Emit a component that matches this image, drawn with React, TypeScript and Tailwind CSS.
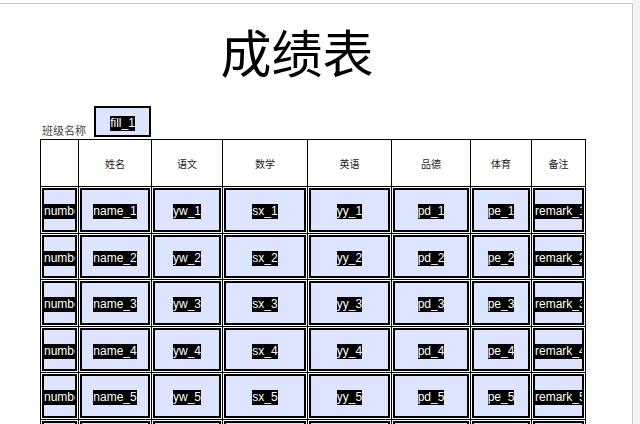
const HEADERS = ["", "姓名", "语文", "数学", "英语", "品德", "体育", "备注"]
const FIELDS = ["number", "name", "yw", "sx", "yy", "pd", "pe", "remark"]
const ROW_HEIGHTS = ["h-[46px]", "h-[45px]", "h-[46px]", "h-[45px]", "h-[46px]", "h-[46px]", "h-[45px]"]

const BOX_CLASS =
  "flex h-full items-center border-2 border-black bg-[#dde4ff] overflow-hidden"

function FieldText({ value }: { value: string }) {
  return (
    <div className="w-full overflow-hidden whitespace-nowrap pt-[3px] text-center leading-[15px]">
      <span className="inline-block h-[15px] bg-black align-top text-[12px] leading-[14px] text-white">
        {value}
      </span>
    </div>
  )
}

export default function App() {
  return (
    <div className="flex h-screen overflow-hidden bg-white font-['Liberation_Sans','Noto_Sans_CJK_SC',sans-serif]">
      <div className="mt-[3px] w-[633px] shrink-0 border-t border-r border-[#c8c8c8]">
        <div className="mt-[22px] w-[594px] text-center font-['Noto_Sans_CJK_SC',sans-serif] text-[51px] leading-[51px] text-black">
          成绩表
        </div>

        <div className="mt-[29px] ml-[42px] flex items-end gap-[8px]">
          <span className="mb-[1px] font-['Noto_Sans_CJK_SC',sans-serif] text-[11px] leading-[12px] text-[#444]">
            班级名称
          </span>
          <div className="flex h-[31px] w-[57px] items-center border-2 border-black bg-[#dde4ff]">
            <FieldText value="fill_1" />
          </div>
        </div>

        <div className="mt-[2px] ml-[40px] grid w-fit grid-cols-[37px_72px_70px_84px_83px_78px_60px_53px] gap-px border border-black bg-black">
          {HEADERS.map((header, index) => (
            <div
              key={index}
              className="flex h-[46px] items-center justify-center bg-white font-['Noto_Sans_CJK_SC',sans-serif] text-[10px] text-[#222]"
            >
              {header}
            </div>
          ))}
          {ROW_HEIGHTS.map((rowHeight, rowIndex) =>
            FIELDS.map((field) => (
              <div key={`${field}-${rowIndex}`} className={`${rowHeight} bg-white p-px`}>
                <div className={BOX_CLASS}>
                  <FieldText value={`${field}_${rowIndex + 1}`} />
                </div>
              </div>
            )),
          )}
        </div>
      </div>
      <div className="flex-1 bg-[#f3f3f3]" />
    </div>
  )
}
